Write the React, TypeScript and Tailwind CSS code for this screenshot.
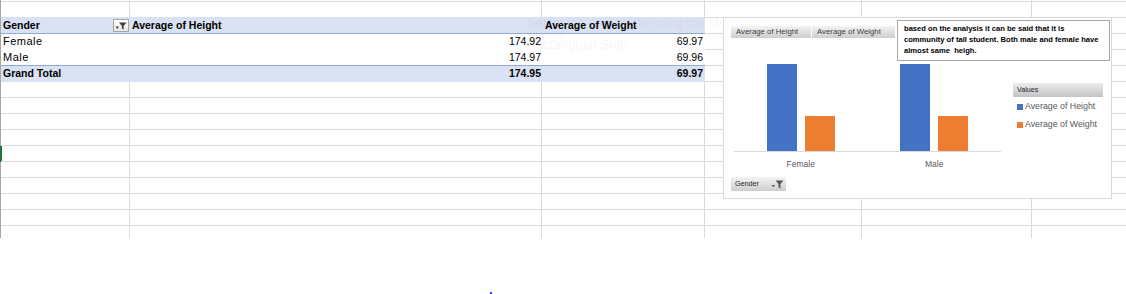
import React from "react";

const GRID = "border-[#dadada]";
const BAND = "bg-[#d9e1f2]";

// column widths (each includes its 1px right gridline)
const COLS = ["w-[129px]", "w-[412px]", "w-[163px]", "w-[157px]", "w-[170px]"];

function PlainCells({ from, green }: { from: number; green?: boolean }) {
  return (
    <>
      {COLS.slice(from).map((w, i) => (
        <div
          key={i}
          className={`${w} h-full border-r border-b ${GRID} ${
            green && from + i === 0 ? "shadow-[inset_1px_0_0_#217346]" : ""
          }`}
        />
      ))}
      <div className={`flex-1 h-full border-b ${GRID}`} />
    </>
  );
}

function FilterIcon() {
  return (
    <svg width="12" height="10" viewBox="0 0 12 10">
      <path d="M0.5 5.5h3.5l-1.75 2.5z" fill="#404040" />
      <path d="M4 1.5h7.5l-2.9 3.4v3.6l-1.7-1v-2.6z" fill="#404040" />
    </svg>
  );
}

function PivotRow({
  kind,
  a,
  b,
  c,
}: {
  kind: "head" | "item" | "itemLast" | "total";
  a: string;
  b: string;
  c: string;
}) {
  const bg = kind === "head" || kind === "total" ? BAND : "bg-white";
  const bottom =
    kind === "head" || kind === "itemLast"
      ? "border-[#8ea9db]"
      : kind === "total"
      ? "border-[#d9e1f2]"
      : "border-white";
  const bold = kind === "head" || kind === "total" ? "font-bold" : "";
  const item = kind === "item" || kind === "itemLast";
  return (
    <div className="flex h-4">
      <div className="w-px h-full bg-[#a6a6a6]" />
      <div className={`w-[704px] h-full flex border-b ${bg} ${bottom} ${bold} text-black leading-[15px]`}>
        <div className="w-[129px] flex pl-[2px] pr-[1px]">
          <span className={item ? "text-[11px] tracking-[0.5px]" : "text-[10.5px]"}>{a}</span>
          {kind === "head" && (
            <div className="ml-auto mt-[1px] w-[16px] h-[13px] border border-[#a6a6a6] bg-linear-to-b from-white to-[#e6e6e6] flex items-center justify-center">
              <FilterIcon />
            </div>
          )}
        </div>
        <div className={`w-[412px] text-[10.5px] ${kind === "head" ? "pl-[2px]" : "text-right pr-[1px]"}`}>{b}</div>
        <div className={`w-[163px] text-[10.5px] ${kind === "head" ? "pl-[3px]" : "text-right pr-[2px]"}`}>{c}</div>
      </div>
      <PlainCells from={3} />
    </div>
  );
}

function GridRow({ aboveHeader, green }: { aboveHeader?: boolean; green?: boolean }) {
  return (
    <div className="flex h-4">
      <div className={`w-px h-full ${green ? "bg-[#217346]" : "bg-[#a6a6a6]"}`} />
      {aboveHeader ? (
        <>
          <div className="w-[129px] h-full border-r border-b border-r-[#dadada] border-b-[#d9e1f2]" />
          <div className="w-[412px] h-full border-r border-b border-r-[#dadada] border-b-[#d9e1f2]" />
          <div className="w-[163px] h-full border-r border-b border-r-[#dadada] border-b-[#d9e1f2]" />
          <PlainCells from={3} />
        </>
      ) : (
        <PlainCells from={0} green={green} />
      )}
    </div>
  );
}

function FieldButton({ w, children }: { w: string; children: React.ReactNode }) {
  return (
    <div className={`${w} h-[12px] bg-linear-to-b from-[#f4f4f4] to-[#cdcdcd] text-[7.8px] leading-[12px] text-[#404040] pl-[5px] whitespace-nowrap`}>
      {children}
    </div>
  );
}

const groups = [
  { label: "Female", height: 174.92, weight: 69.97 },
  { label: "Male", height: 174.97, weight: 69.96 },
];

function Chart() {
  return (
    <div className="absolute left-[723px] top-[17px] w-[389px] h-[182px] border border-[#d9d9d9] bg-white">
      <div className="flex pl-[7px] pt-[8px]">
        <div className="w-[270px] flex flex-col">
          <div className="flex gap-[1px]">
            <FieldButton w="w-[80px]">Average of Height</FieldButton>
            <FieldButton w="w-[83px]">Average of Weight</FieldButton>
          </div>
          <div className="ml-[3px] h-[114px] border-b border-[#d9d9d9] flex">
            {groups.map((g) => (
              <div key={g.label} className="flex-1 flex items-end justify-center gap-[8px]">
                <div className="w-[30px] bg-[#4472c4]" style={{ height: Math.round(g.height / 2.011) }} />
                <div className="w-[30px] bg-[#ed7d31]" style={{ height: Math.round(g.weight / 2.0) }} />
              </div>
            ))}
          </div>
          <div className="ml-[3px] mt-[6px] h-[12px] flex text-[8.5px] leading-[12px] text-[#595959]">
            {groups.map((g) => (
              <div key={g.label} className="flex-1 text-center">
                {g.label}
              </div>
            ))}
          </div>
          <div className="mt-[7px] w-[55px] h-[14px] bg-linear-to-b from-[#f4f4f4] to-[#cdcdcd] flex items-center pl-[4px] pr-[2px] text-[7.2px] text-[#262626]">
            <span>Gender</span>
            <span className="ml-auto">
              <svg width="13" height="9" viewBox="0 0 13 9">
                <path d="M0.5 5h3.5l-1.75 2.2z" fill="#595959" />
                <path d="M4.5 0.5h8l-3 3.4v4.6l-2-1.2v-3.4z" fill="#595959" />
              </svg>
            </span>
          </div>
        </div>
        <div className="ml-[12px] mt-[57px] w-[90px]">
          <div className="h-[14px] bg-linear-to-b from-[#ececec] to-[#c4c4c4] text-[7.2px] leading-[14px] pl-[4px] text-[#262626]">
            Values
          </div>
          {[
            { color: "bg-[#4472c4]", text: "Average of Height" },
            { color: "bg-[#ed7d31]", text: "Average of Weight" },
          ].map((l) => (
            <div key={l.text} className="h-[18px] flex items-center pl-[4px] pt-[2px] whitespace-nowrap">
              <div className={`w-[6px] h-[6px] ${l.color}`} />
              <span className="ml-[2px] text-[8.8px] text-[#595959]">{l.text}</span>
            </div>
          ))}
        </div>
      </div>
      <div className="absolute left-[173px] top-[2px] w-[213px] h-[41px] border border-[#a6a6a6] bg-white pl-[6px] pt-[2px] text-[7.6px] leading-[11px] font-bold text-black whitespace-pre">
        {"based on the analysis it can be said that it is\ncommunity of tall student. Both male and female have\nalmost same  heigh."}
      </div>
    </div>
  );
}

// faded snipping-tool hint left over in the screenshot
function SnipGhost() {
  return (
    <div className="pointer-events-none">
      <div className="absolute left-[527px] top-[15px] text-[13px] leading-[16px] text-black/[0.05] whitespace-nowrap">
        Select the snip mode using the Mode button or click the New
      </div>
      <div className="absolute left-[527px] top-[30px] text-[13px] leading-[16px] text-black/[0.05]">button.</div>
      <div className="absolute left-[527px] top-[37px] text-[13px] leading-[16px] text-black/[0.06]">Rectangular Snip</div>
    </div>
  );
}

export default function App() {
  const rows: React.ReactNode[] = [];
  for (let i = 0; i < 16; i++) {
    if (i === 1) rows.push(<GridRow key={i} aboveHeader />);
    else if (i === 2) rows.push(<PivotRow key={i} kind="head" a="Gender" b="Average of Height" c="Average of Weight" />);
    else if (i === 3) rows.push(<PivotRow key={i} kind="item" a="Female" b="174.92" c="69.97" />);
    else if (i === 4) rows.push(<PivotRow key={i} kind="itemLast" a="Male" b="174.97" c="69.96" />);
    else if (i === 5) rows.push(<PivotRow key={i} kind="total" a="Grand Total" b="174.95" c="69.97" />);
    else rows.push(<GridRow key={i} green={i === 10} />);
  }

  return (
    <div className="w-[1126px] h-[294px] bg-white font-['Liberation_Sans',Arial,sans-serif] overflow-hidden">
      <div className="relative h-[238px] overflow-hidden">
        <div className="-mt-[14px]">{rows}</div>
        <SnipGhost />
        <Chart />
      </div>
      <div className="pl-[490px] pt-[54px]">
        <div className="w-[2px] h-[2px] bg-[#3b3bff]" />
      </div>
    </div>
  );
}
